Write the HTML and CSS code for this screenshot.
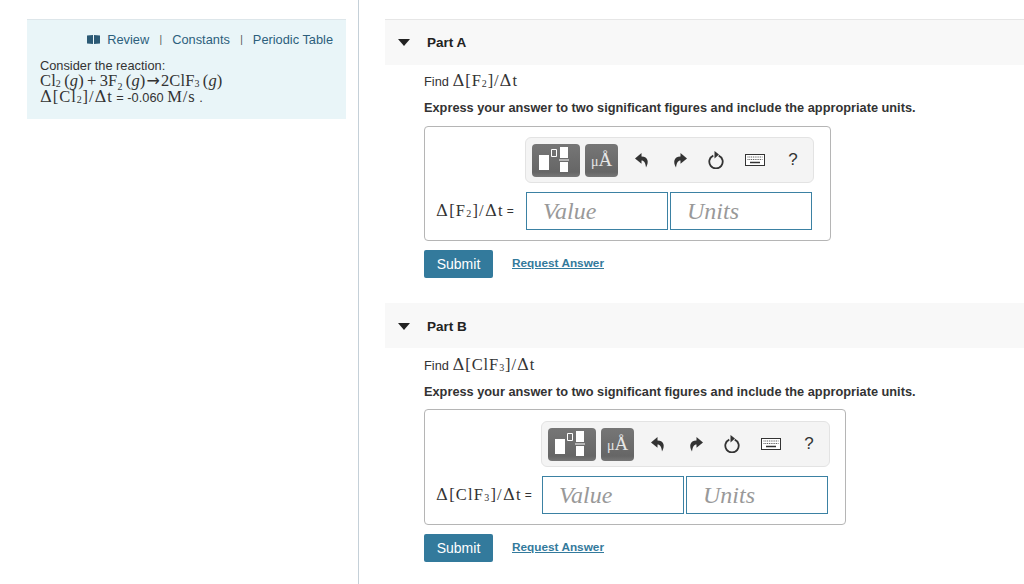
FILE: index.html
```html
<!DOCTYPE html>
<html lang="en">
<head>
<meta charset="utf-8">
<title>Reaction rates</title>
<link rel="stylesheet" href="styles.css">
</head>
<body>
<div class="page">
  <aside class="side">
    <div class="info">
      <nav class="links">
        <svg class="book" width="13" height="9" viewBox="0 0 13 9"><path d="M0 .5 6 0v9L0 8.500zM7 0l6 .5v8L7 9z" fill="#2c5a75"/></svg>
        <a>Review</a><span class="sep">|</span><a>Constants</a><span class="sep">|</span><a>Periodic Table</a>
      </nav>
      <p class="intro">Consider the reaction:</p>
      <p class="eq"><span class="m rxn">Cl<sub>2</sub> (<i>g</i>) + 3F<sub class="low">2</sub> (<i>g</i>)<span class="arrow">→</span>2ClF<sub>3</sub> (<i>g</i>)</span></p>
      <p class="eq"><span class="m wide"><span class="d">Δ</span>[Cl<sub>2</sub>]/<span class="d">Δ</span>t</span> <span class="eqv">= -0.060</span> <span class="m wide">M/s</span> .</p>
    </div>
  </aside>
  <main class="main">
    <section class="part">
      <header class="part-head"><span class="tri"></span><h2>Part A</h2></header>
      <div class="part-body">
        <p class="find">Find <span class="m wide"><span class="d">Δ</span>[F<sub>2</sub>]/<span class="d">Δ</span>t</span></p>
        <p class="express">Express your answer to two significant figures and include the appropriate units.</p>
        <div class="answer">
          <div class="label label-a"><span class="m wider"><span class="d">Δ</span>[F<sub>2</sub>]/<span class="d">Δ</span>t</span> <span class="eqs">=</span></div>
          <div class="work">
            <div class="toolbar">
              <span class="tbtn tmpl"><svg width="30" height="26" viewBox="0 0 30 26"><path d="M0 8h10v15H0zM21 0h8v11h-8zM21 15h8v10h-8zM20 12.500h10v1H20z" fill="#fff"/><path d="M12.500 2.500h5v7h-5z" fill="none" stroke="#fff"/></svg></span>
              <span class="tbtn mu"><span class="mu-s">μ</span>Å</span>
              <span class="tools">
                <svg class="undo" width="14" height="15" viewBox="0 0 14 15"><path d="M6.500 0 0 5.500l6.500 5.200V7.500c2.500 0 4 2.500 4.500 7 3-5 2.500-11-4.500-11z" fill="#333"/></svg>
                <svg width="14" height="15" viewBox="0 0 14 15"><path d="M7.500 0 14 5.500l-6.500 5.200V7.500c-2.500 0-4 2.500-4.500 7-3-5-2.500-11 4.500-11z" fill="#333"/></svg>
                <svg width="16" height="18" viewBox="0 0 16 18"><path d="M5.300 4.600a6.700 6.700 0 1 0 5.400 0" fill="none" stroke="#333" stroke-width="1.800"/><path d="M6.500 0v7.500L11 3.500z" fill="#333"/></svg>
                <svg width="20" height="12" viewBox="0 0 20 12"><rect x=".5" y=".5" width="19" height="11" fill="#fff" stroke="#333"/><path d="M2.500 3h15M2.500 5.500h15" stroke="#555" stroke-width="1.200" stroke-dasharray="1 .8"/><path d="M5 8.500h10" stroke="#333" stroke-width="1.500"/></svg>
                <span class="help">?</span>
              </span>
            </div>
            <div class="inputs"><span class="field">Value</span><span class="field">Units</span></div>
          </div>
        </div>
        <div class="actions"><button class="submit">Submit</button><a class="req">Request Answer</a></div>
      </div>
    </section>
    <section class="part part-b">
      <header class="part-head"><span class="tri"></span><h2>Part B</h2></header>
      <div class="part-body">
        <p class="find">Find <span class="m wide"><span class="d">Δ</span>[ClF<sub>3</sub>]/<span class="d">Δ</span>t</span></p>
        <p class="express">Express your answer to two significant figures and include the appropriate units.</p>
        <div class="answer">
          <div class="label label-b"><span class="m wider"><span class="d">Δ</span>[ClF<sub>3</sub>]/<span class="d">Δ</span>t</span> <span class="eqs">=</span></div>
          <div class="work">
            <div class="toolbar">
              <span class="tbtn tmpl"><svg width="30" height="26" viewBox="0 0 30 26"><path d="M0 8h10v15H0zM21 0h8v11h-8zM21 15h8v10h-8zM20 12.500h10v1H20z" fill="#fff"/><path d="M12.500 2.500h5v7h-5z" fill="none" stroke="#fff"/></svg></span>
              <span class="tbtn mu"><span class="mu-s">μ</span>Å</span>
              <span class="tools">
                <svg class="undo" width="14" height="15" viewBox="0 0 14 15"><path d="M6.500 0 0 5.500l6.500 5.200V7.500c2.500 0 4 2.500 4.500 7 3-5 2.500-11-4.500-11z" fill="#333"/></svg>
                <svg width="14" height="15" viewBox="0 0 14 15"><path d="M7.500 0 14 5.500l-6.500 5.200V7.500c-2.500 0-4 2.500-4.500 7-3-5-2.500-11 4.500-11z" fill="#333"/></svg>
                <svg width="16" height="18" viewBox="0 0 16 18"><path d="M5.300 4.600a6.700 6.700 0 1 0 5.400 0" fill="none" stroke="#333" stroke-width="1.800"/><path d="M6.500 0v7.500L11 3.500z" fill="#333"/></svg>
                <svg width="20" height="12" viewBox="0 0 20 12"><rect x=".5" y=".5" width="19" height="11" fill="#fff" stroke="#333"/><path d="M2.500 3h15M2.500 5.500h15" stroke="#555" stroke-width="1.200" stroke-dasharray="1 .8"/><path d="M5 8.500h10" stroke="#333" stroke-width="1.500"/></svg>
                <span class="help">?</span>
              </span>
            </div>
            <div class="inputs"><span class="field">Value</span><span class="field">Units</span></div>
          </div>
        </div>
        <div class="actions"><button class="submit">Submit</button><a class="req">Request Answer</a></div>
      </div>
    </section>
  </main>
</div>
</body>
</html>
```
FILE: styles.css
```css
* { box-sizing: border-box; }
html, body { margin: 0; height: 100%; background: #fff; overflow: hidden; }
body { font-family: "Liberation Sans", Arial, sans-serif; color: #333; font-size: 12.800px; }
p, h2 { margin: 0; }
.page { display: grid; grid-template-columns: 359px 1fr; height: 584px; }
.side { border-right: 1px solid #c5d0d8; padding: 19px 12px 0 27px; }
.info { background: #e9f5f8; border-top: 1px solid #dde6ea; height: 100px; padding: 12px 13px 0 13px; }
.links { display: flex; justify-content: flex-end; align-items: center; color: #2c5f7c; height: 14px; margin-bottom: 13px; }
.book { margin-right: 7px; }
.sep { font-size: 10px; margin: 0 10px; color: #555; padding-left: .4px; }
.intro { line-height: 13px; }
.eq { line-height: 16px; height: 16px; white-space: nowrap; position: relative; top: 1px; }
.m { font-family: "Liberation Serif", "Times New Roman", serif; font-size: 16.500px; }
.m sub { font-size: 10px; line-height: 0; vertical-align: -1px; }
.m sub.low { vertical-align: -4px; }
.rxn { letter-spacing: .12px; word-spacing: -1px; }
.m.wide { letter-spacing: .9px; }
.m.wider { letter-spacing: 1.200px; }
.d { font-family: "DejaVu Serif", serif; font-size: 16.500px; }
.arrow { font-family: "DejaVu Sans", sans-serif; font-size: 16px; margin: 0 1px; }
.eqv { font-size: 12.800px; }
.main { padding: 19px 0 0 26px; }
.part { height: 284px; }
.part-head { height: 46px; background: #f8f8f8; border-top: 1px solid #e6e6e6; display: flex; align-items: center; padding-left: 13px; }
.part-b .part-head { height: 45px; border-top: 0; padding-top: 1px; }
.tri { width: 0; height: 0; border-left: 6px solid transparent; border-right: 6px solid transparent; border-top: 7px solid #222; margin-right: 17px; }
h2 { font-size: 13.500px; font-weight: bold; color: #222; }
.part-body { padding: 0 0 0 39px; }
.find { height: 33px; padding-top: 6px; line-height: 20px; white-space: nowrap; }
.express { font-weight: bold; line-height: 20px; height: 28px; white-space: nowrap; font-size: 12.780px; }
.part-b .find { height: 34px; padding-top: 7px; }
.part-b .express { height: 27px; }
.answer { display: inline-flex; border: 1px solid #b5b5b5; border-radius: 4px; padding: 10px 17px 10px 11px; height: 115px; vertical-align: top; }
.part-b .answer { height: 116px; padding: 11px 16px 10px 11px; }
.label { display: flex; align-items: center; gap: 3px; height: 38px; margin-top: 55px; white-space: nowrap; }
.label-a { width: 90px; }
.label-b { width: 106px; }
.eqs { font-size: 12px; }
.work { width: 288px; margin-left: -1px; display: flex; flex-direction: column; gap: 9px; }
.toolbar { height: 46px; width: 289px; background: #f4f4f4; border: 1px solid #e3e3e3; border-radius: 6px; display: flex; align-items: center; padding-left: 6px; gap: 5px; }
.tbtn { height: 33px; border-radius: 4px; background: linear-gradient(#767676, #666 85%, #777); display: flex; align-items: center; justify-content: center; color: #e6e6e6; }
.tmpl { width: 48px; padding-right: 4px; }
.mu { width: 33px; font-family: "Liberation Serif", serif; font-size: 19px; }
.mu-s { font-size: 14px; margin-top: 3px; }
.tools { display: flex; align-items: center; margin-left: 12px; gap: 21px; }
.undo { margin-right: 3px; }
.help { font-size: 17px; color: #333; width: 14px; text-align: center; }
.inputs { display: flex; gap: 2px; margin-left: 1px; }
.field { width: 142px; height: 38px; border: 1px solid #3b81a3; display: flex; align-items: center; padding-left: 16px; font-family: "Liberation Serif", serif; font-style: italic; font-size: 24px; color: #999; }
.actions { display: flex; align-items: center; margin-top: 9px; height: 28px; }
.submit { width: 69px; height: 28px; border: 0; border-radius: 2px; background: #337a9c; color: #fff; font: 14px "Liberation Sans", Arial, sans-serif; padding: 0; }
.req { margin: 0 0 2px 19px; color: #337a9c; font-weight: bold; font-size: 11.800px; text-decoration: underline; }
```
